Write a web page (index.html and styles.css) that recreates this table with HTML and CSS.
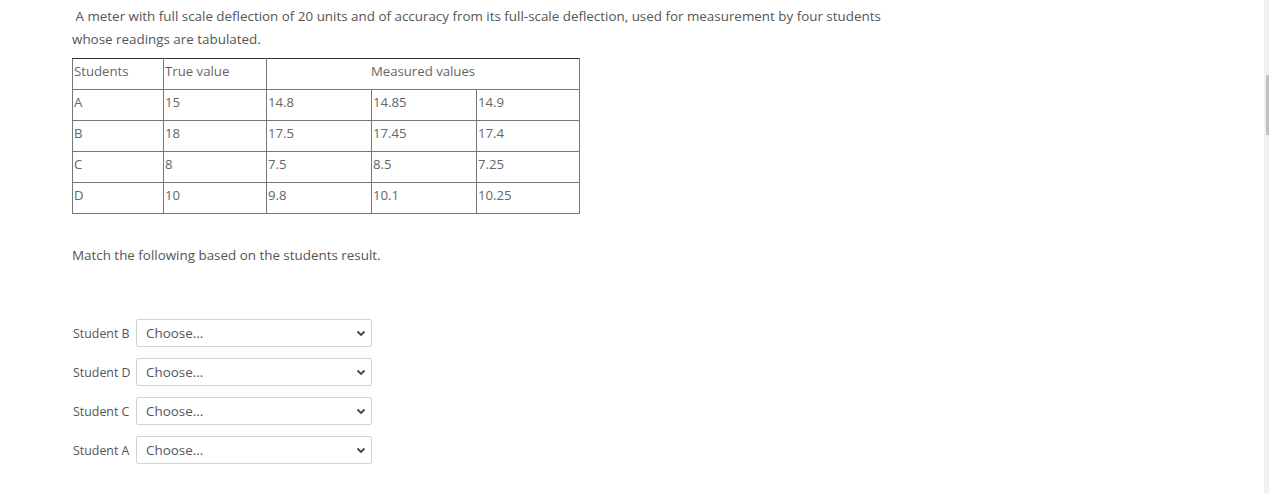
FILE: index.html
```html
<!DOCTYPE html>
<html>
<head>
<meta charset="utf-8">
<link rel="stylesheet" href="styles.css">
</head>
<body>
<div class="page">
  <p class="intro">&nbsp;A meter with full scale deflection of 20 units and of accuracy from its full-scale deflection, used for measurement by four students whose readings are tabulated.</p>
  <table class="readings">
    <colgroup>
      <col class="c1"><col class="c2"><col class="c3"><col class="c4"><col class="c5">
    </colgroup>
    <tr><td>Students</td><td>True value</td><td colspan="3" class="center">Measured values</td></tr>
    <tr><td>A</td><td>15</td><td>14.8</td><td>14.85</td><td>14.9</td></tr>
    <tr><td>B</td><td>18</td><td>17.5</td><td>17.45</td><td>17.4</td></tr>
    <tr><td>C</td><td>8</td><td>7.5</td><td>8.5</td><td>7.25</td></tr>
    <tr><td>D</td><td>10</td><td>9.8</td><td>10.1</td><td>10.25</td></tr>
  </table>
  <p class="match">Match the following based on the students result.</p>
  <div class="answers">
    <div class="row"><span class="label">Student B</span><div class="select"><span>Choose...</span><svg width="10" height="7" viewBox="0 0 10 7"><path d="M1.5 1.5 L5 5 L8.5 1.5" fill="none" stroke="#444" stroke-width="1.8"/></svg></div></div>
    <div class="row"><span class="label">Student D</span><div class="select"><span>Choose...</span><svg width="10" height="7" viewBox="0 0 10 7"><path d="M1.5 1.5 L5 5 L8.5 1.5" fill="none" stroke="#444" stroke-width="1.8"/></svg></div></div>
    <div class="row"><span class="label">Student C</span><div class="select"><span>Choose...</span><svg width="10" height="7" viewBox="0 0 10 7"><path d="M1.5 1.5 L5 5 L8.5 1.5" fill="none" stroke="#444" stroke-width="1.8"/></svg></div></div>
    <div class="row"><span class="label">Student A</span><div class="select"><span>Choose...</span><svg width="10" height="7" viewBox="0 0 10 7"><path d="M1.5 1.5 L5 5 L8.5 1.5" fill="none" stroke="#444" stroke-width="1.8"/></svg></div></div>
  </div>
</div>
<div class="scrolltrack"><div class="thumb"></div></div>
</body>
</html>
```
FILE: styles.css
```css
html, body {
  margin: 0;
  padding: 0;
  background: #fff;
}
body {
  font-family: "Open Sans", "Noto Sans", sans-serif;
  font-size: 13.4px;
  color: #555;
}
.page {
  padding: 5px 0 0 72px;
}
.intro {
  margin: 0;
  width: 840px;
  line-height: 23px;
}
.readings {
  margin-top: 7px;
  border-collapse: collapse;
  border: 1px solid #333;
  table-layout: fixed;
  width: 507px;
  color: #666;
  font-size: 13.2px;
}
.readings .c1 { width: 91px; }
.readings .c2 { width: 103px; }
.readings .c3 { width: 105px; }
.readings .c4 { width: 105px; }
.readings .c5 { width: 103px; }
.readings tr {
  height: 31px;
}
.readings td {
  border: 1px solid #777;
  padding: 2px 1px 0 1px;
  vertical-align: top;
  line-height: 20px;
}
.readings tr:first-child td {
  border-top-color: #333;
}
.readings td.center {
  text-align: center;
}
.match {
  margin: 30px 0 0 0;
  line-height: 23px;
}
.answers {
  margin-top: 52px;
  display: flex;
  flex-direction: column;
  gap: 11px;
}
.row {
  display: flex;
  align-items: center;
  gap: 6px;
}
.label {
  font-size: 12.4px;
  color: #555;
  width: 57px;
  padding-left: 1px;
  white-space: nowrap;
}
.select {
  height: 26px;
  border: 1px solid #d4d4d4;
  border-radius: 2px;
  display: flex;
  align-items: center;
  justify-content: space-between;
  padding: 0 5px 0 9px;
  color: #555;
  box-sizing: content-box;
  width: 220px;
}
.scrolltrack {
  position: fixed;
  top: 0;
  right: 0;
  width: 5px;
  height: 100%;
  background: #f1f1f1;
}
.thumb {
  margin: 75px 0 0 2px;
  width: 3px;
  height: 60px;
  background: #c1c1c1;
}
```
